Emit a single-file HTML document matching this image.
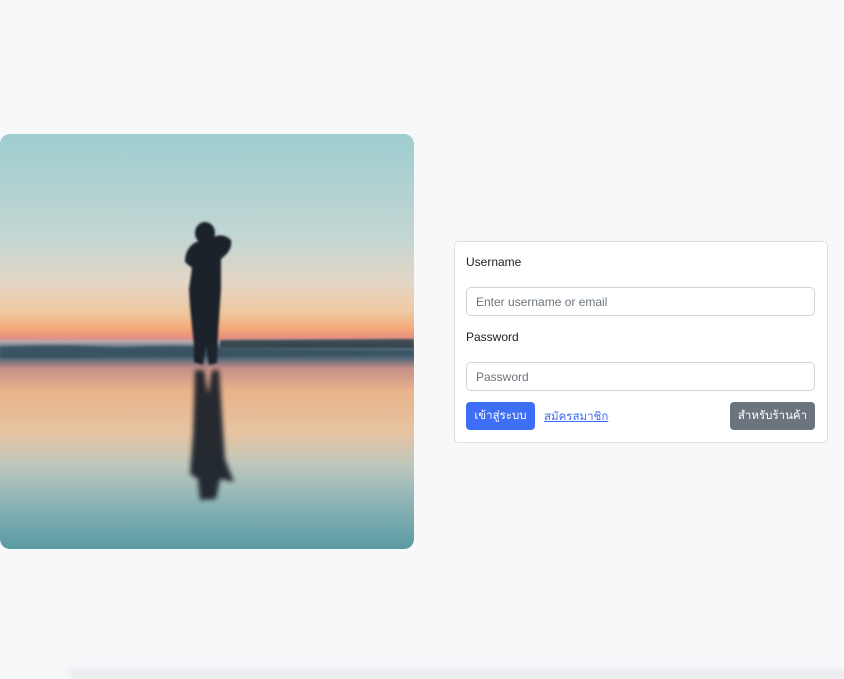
<!DOCTYPE html>
<html style="overflow:hidden;height:679px"><head><meta charset="utf-8"><style>
body{margin:0;width:844px;height:679px;background:#f7f8fa;font-family:"Liberation Sans",sans-serif;position:relative;overflow:hidden}
.img{position:absolute;left:0;top:134px;width:414px;height:415px;border-radius:10px;overflow:hidden}
.shadow{position:absolute;left:70px;right:0;top:668px;height:11px;background:linear-gradient(#eff0f2,#e3e4e7);filter:blur(4px)}
.card{position:absolute;left:454px;top:241px;width:374px;height:202px;box-sizing:border-box;background:#fff;border:1px solid #dcdfe3;border-radius:5px}
.lbl{position:absolute;left:11px;font-size:12px;color:#222}
.inp{position:absolute;left:11px;width:349px;height:29px;box-sizing:border-box;border:1px solid #ced4da;border-radius:5px;font-size:12px;color:#6c757d;padding:7px 9px}
.btn{position:absolute;top:160px;height:28px;border-radius:4px;color:#fff;font-size:11.5px;line-height:28px;text-align:center;white-space:nowrap}
</style></head><body>
<div class="img"><svg width="414" height="415" viewBox="0 0 414 415">
<defs>
<linearGradient id="s" x1="0" y1="0" x2="0" y2="1">
<stop offset="0" stop-color="#9ecdd0"/><stop offset=".25" stop-color="#c3d6d3"/><stop offset=".36" stop-color="#e4d6c6"/><stop offset=".43" stop-color="#f0c8a0"/><stop offset=".47" stop-color="#f3a878"/><stop offset=".49" stop-color="#e88f80"/>
<stop offset=".5" stop-color="#b6a7ad"/><stop offset=".515" stop-color="#5a7280"/><stop offset=".54" stop-color="#52677a"/><stop offset=".565" stop-color="#c59088"/><stop offset=".62" stop-color="#e9b38b"/><stop offset=".72" stop-color="#e7c4a2"/><stop offset=".8" stop-color="#bdc6bc"/><stop offset=".9" stop-color="#86b1b4"/><stop offset="1" stop-color="#5a9aa3"/>
</linearGradient><filter id="b"><feGaussianBlur stdDeviation="1"/></filter><filter id="b2"><feGaussianBlur stdDeviation="2.5"/></filter></defs>
<rect width="414" height="415" fill="url(#s)"/>
<path d="M220 206 L414 205 L414 214 L220 214 Z" fill="#2c3a42" opacity=".85" filter="url(#b)"/>
<path d="M0 213 Q60 209 120 214 Q170 210 220 214 L414 216 L414 222 L0 224 Z" fill="#2e4a58" opacity=".7" filter="url(#b)"/>
<g fill="#1d2329" filter="url(#b)">
<ellipse cx="205" cy="99" rx="10" ry="11"/>
<path d="M196 108 Q185 114 185 128 L192 134 L189 155 L190 172 L194 212 L194 228 L203 231 L206 212 L209 231 L217 229 L218 200 L221 155 L221 125 Q233 116 231 106 Q222 98 212 104 Z"/>
</g>
<g fill="#1e2429" filter="url(#b2)" opacity=".95">
<path d="M195 236 L204 236 L208 260 L212 236 L219 236 L222 280 L225 325 L234 348 L220 345 L216 365 L200 366 L198 345 L190 340 L193 300 Z"/>
</g>
</svg></div>
<div class="shadow"></div>
<div class="card">
<div class="lbl" style="top:13px">Username</div>
<div class="inp" style="top:45px">Enter username or email</div>
<div class="lbl" style="top:88px">Password</div>
<div class="inp" style="top:120px">Password</div>
<div class="btn" style="left:11px;width:69px;background:#3d6ef5">เข้าสู่ระบบ</div>
<div style="position:absolute;left:89px;top:166px;font-size:11.5px;color:#3d6ef5;text-decoration:underline">สมัครสมาชิก</div>
<div class="btn" style="left:275px;width:85px;background:#6c757d">สำหรับร้านค้า</div>
</div>
</body></html>
